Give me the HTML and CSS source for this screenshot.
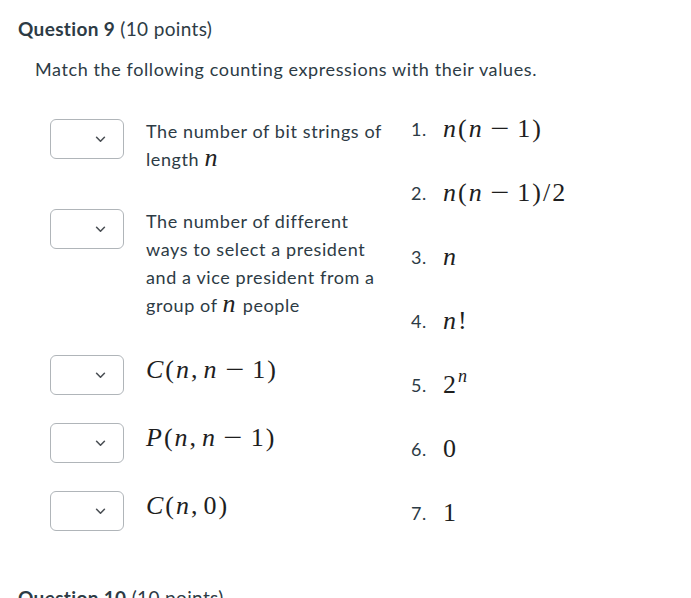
FILE: index.html
```html
<!DOCTYPE html>
<html lang="en">
<head>
<meta charset="utf-8">
<title>Question 9</title>
<link rel="stylesheet" href="styles.css">
</head>
<body>
<div class="page">
  <h2 class="q-title"><strong>Question 9</strong> (10 points)</h2>
  <p class="q-text">Match the following counting expressions with their values.</p>

  <div class="match">
    <div class="left">
      <div class="row text-row">
        <div class="select"><svg class="chev" viewBox="0 0 12 8" width="11" height="7"><path d="M1.5 1.5 L6 6 L10.5 1.5" fill="none" stroke="#4a4f54" stroke-width="1.8" stroke-linecap="round" stroke-linejoin="round"/></svg></div>
        <div class="prompt">The number of bit strings of length <span class="mi">n</span></div>
      </div>
      <div class="row text-row">
        <div class="select"><svg class="chev" viewBox="0 0 12 8" width="11" height="7"><path d="M1.5 1.5 L6 6 L10.5 1.5" fill="none" stroke="#4a4f54" stroke-width="1.8" stroke-linecap="round" stroke-linejoin="round"/></svg></div>
        <div class="prompt">The number of different ways to select a president and a vice president from a group of <span class="mi">n</span> people</div>
      </div>
      <div class="row math-row">
        <div class="select"><svg class="chev" viewBox="0 0 12 8" width="11" height="7"><path d="M1.5 1.5 L6 6 L10.5 1.5" fill="none" stroke="#4a4f54" stroke-width="1.8" stroke-linecap="round" stroke-linejoin="round"/></svg></div>
        <div class="math"><i>C</i>(<i>n</i>,<span class="thin"></span><i>n</i><span class="op">−</span>1)</div>
      </div>
      <div class="row math-row">
        <div class="select"><svg class="chev" viewBox="0 0 12 8" width="11" height="7"><path d="M1.5 1.5 L6 6 L10.5 1.5" fill="none" stroke="#4a4f54" stroke-width="1.8" stroke-linecap="round" stroke-linejoin="round"/></svg></div>
        <div class="math"><i>P</i>(<i>n</i>,<span class="thin"></span><i>n</i><span class="op">−</span>1)</div>
      </div>
      <div class="row math-row">
        <div class="select"><svg class="chev" viewBox="0 0 12 8" width="11" height="7"><path d="M1.5 1.5 L6 6 L10.5 1.5" fill="none" stroke="#4a4f54" stroke-width="1.8" stroke-linecap="round" stroke-linejoin="round"/></svg></div>
        <div class="math"><i>C</i>(<i>n</i>,<span class="thin"></span>0)</div>
      </div>
    </div>

    <ol class="answers">
      <li><span class="num">1.</span><span class="math"><i>n</i>(<i>n</i><span class="op">−</span>1)</span></li>
      <li><span class="num">2.</span><span class="math"><i>n</i>(<i>n</i><span class="op">−</span>1)/2</span></li>
      <li><span class="num">3.</span><span class="math"><i>n</i></span></li>
      <li><span class="num">4.</span><span class="math"><i>n</i>!</span></li>
      <li><span class="num">5.</span><span class="math">2<sup><i>n</i></sup></span></li>
      <li><span class="num">6.</span><span class="math">0</span></li>
      <li><span class="num">7.</span><span class="math">1</span></li>
    </ol>
  </div>

  <h2 class="q-title next"><strong>Question 10</strong> (10 points)</h2>
</div>
</body>
</html>
```
FILE: styles.css
```css
html, body {
  margin: 0;
  padding: 0;
  background: #ffffff;
}

body {
  font-family: Lato, "Open Sans", sans-serif;
  color: #2d3b45;
  overflow: hidden;
  height: 598px;
}

.page {
  padding: 17px 0 0 18px;
}

.q-title {
  margin: 0;
  font-size: 19px;
  line-height: 24px;
  font-weight: 400;
  letter-spacing: 0.35px;
  color: #2d3b45;
}

.q-title strong {
  font-weight: 700;
}

.q-title.next {
  margin-top: 41px;
}

.q-text {
  margin: 16px 0 0 17px;
  font-size: 18px;
  line-height: 24px;
  letter-spacing: 0.6px;
}

.match {
  display: flex;
  align-items: flex-start;
  margin-top: 16px;
  margin-left: 32px;
}

.left {
  display: flex;
  flex-direction: column;
  gap: 26px;
  padding-top: 20px;
  width: 338px;
  flex-shrink: 0;
}

.row {
  display: flex;
  align-items: flex-start;
  gap: 22px;
}

.text-row {
  padding-bottom: 8px;
}

.select {
  flex-shrink: 0;
  width: 74px;
  height: 40px;
  margin-top: 2px;
  box-sizing: border-box;
  border: 1px solid #b0b5b9;
  border-radius: 6px;
  display: flex;
  align-items: center;
  justify-content: flex-end;
  padding-right: 17px;
}

.chev {
  display: block;
}

.prompt {
  width: 244px;
  font-size: 18px;
  line-height: 28px;
  letter-spacing: 0.6px;
}

.mi {
  font-family: "Liberation Serif", serif;
  font-style: italic;
  font-size: 26px;
  line-height: 0;
  letter-spacing: 2px;
  color: #222;
}

.math {
  font-family: "Liberation Serif", serif;
  font-size: 26px;
  line-height: 34px;
  letter-spacing: 2px;
  color: #1e1e1e;
  white-space: nowrap;
}

.math i {
  font-style: italic;
}

.math .op {
  display: inline-block;
  margin: 0 8px 0 9px;
  transform: scaleX(1.3);
}

.math .thin {
  display: inline-block;
  width: 4px;
}

.math sup {
  font-size: 18px;
  line-height: 0;
  vertical-align: 0;
  position: relative;
  top: -11px;
}

.answers {
  list-style: none;
  margin: 0 0 0 23px;
  padding: 0;
}

.answers li {
  display: flex;
  align-items: center;
  height: 64px;
}

.answers .num {
  width: 32px;
  font-size: 18px;
  letter-spacing: 0.6px;
}
```
